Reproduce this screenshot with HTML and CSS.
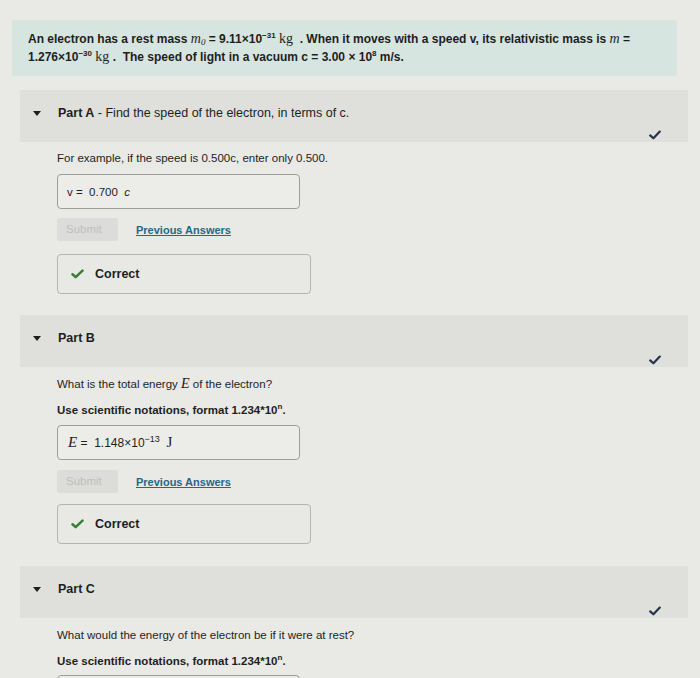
FILE: index.html
```html
<!DOCTYPE html>
<html>
<head>
<meta charset="utf-8">
<link rel="stylesheet" href="styles.css">
</head>
<body>
<div class="page">
  <div class="intro">
    <div class="line">An electron has a rest mass <span class="mi">m</span><sub class="msub">0</sub> = 9.11×10<sup>−31</sup> <span class="mr">kg</span> &nbsp;. When it moves with a speed v, its relativistic mass is <span class="mi">m</span> =</div>
    <div class="line">1.276×10<sup>−30</sup> <span class="mr">kg</span> .&nbsp; The speed of light in a vacuum c = 3.00 × 10<sup>8</sup> m/s.</div>
  </div>

  <section class="part">
    <div class="band">
      <div class="band-title"><span class="tri"></span><span><b>Part A</b> - Find the speed of the electron, in terms of c.</span></div>
      <svg class="status" viewBox="0 0 12 10" width="12" height="10"><path d="M1.2 5.4 L4.4 8.3 L10.8 1.6" fill="none" stroke="#26344a" stroke-width="2.2" stroke-linecap="round" stroke-linejoin="round"/></svg>
    </div>
    <div class="body a">
      <p class="q">For example, if the speed is 0.500c, enter only 0.500.</p>
      <div class="answer"><span>v = &nbsp;0.700 &nbsp;<span class="ic">c</span></span></div>
      <div class="actions"><span class="submit">Submit</span><a class="prev">Previous Answers</a></div>
      <div class="correct"><svg viewBox="0 0 14 11" width="13" height="10"><path d="M1.5 5.8 L5 9 L12.5 1.8" fill="none" stroke="#3a7f36" stroke-width="2.8" stroke-linecap="round" stroke-linejoin="round"/></svg><span>Correct</span></div>
    </div>
  </section>

  <section class="part">
    <div class="band">
      <div class="band-title"><span class="tri"></span><b>Part B</b></div>
      <svg class="status" viewBox="0 0 12 10" width="12" height="10"><path d="M1.2 5.4 L4.4 8.3 L10.8 1.6" fill="none" stroke="#26344a" stroke-width="2.2" stroke-linecap="round" stroke-linejoin="round"/></svg>
    </div>
    <div class="body b">
      <p class="q">What is the total energy <span class="mi">E</span> of the electron?</p>
      <p class="q bold">Use scientific notations, format 1.234*10<sup>n</sup>.</p>
      <div class="answer e"><span><span class="mi big">E</span> = &nbsp;1.148×10<sup>−13</sup> &nbsp;<span class="mr big">J</span></span></div>
      <div class="actions"><span class="submit">Submit</span><a class="prev">Previous Answers</a></div>
      <div class="correct"><svg viewBox="0 0 14 11" width="13" height="10"><path d="M1.5 5.8 L5 9 L12.5 1.8" fill="none" stroke="#3a7f36" stroke-width="2.8" stroke-linecap="round" stroke-linejoin="round"/></svg><span>Correct</span></div>
    </div>
  </section>

  <section class="part">
    <div class="band">
      <div class="band-title"><span class="tri"></span><b>Part C</b></div>
      <svg class="status" viewBox="0 0 12 10" width="12" height="10"><path d="M1.2 5.4 L4.4 8.3 L10.8 1.6" fill="none" stroke="#26344a" stroke-width="2.2" stroke-linecap="round" stroke-linejoin="round"/></svg>
    </div>
    <div class="body c">
      <p class="q">What would the energy of the electron be if it were at rest?</p>
      <p class="q bold">Use scientific notations, format 1.234*10<sup>n</sup>.</p>
      <div class="answer"></div>
    </div>
  </section>
</div>
</body>
</html>
```

FILE: styles.css
```css
html, body {
  margin: 0;
  padding: 0;
  background: #e9e9e6;
}
body {
  font-family: "Liberation Sans", Arial, sans-serif;
  color: #1e1e1e;
  width: 700px;
  height: 678px;
  overflow: hidden;
}
.page {
  padding: 20px 0 0 0;
}
.intro {
  margin: 0 23px 0 12px;
  background: #d6e5e0;
  padding: 10px 0 10px 16px;
  height: 36px;
  font-size: 12px;
  font-weight: bold;
  line-height: 18px;
}
.intro .line {
  white-space: nowrap;
}
sup {
  font-size: 8px;
  vertical-align: 5px;
  line-height: 0;
}
.msub {
  font-size: 9px;
  vertical-align: -2px;
  line-height: 0;
  font-family: "Liberation Serif", serif;
  font-weight: normal;
  font-style: italic;
}
.mi {
  font-family: "Liberation Serif", serif;
  font-style: italic;
  font-weight: normal;
  font-size: 14px;
}
.mr {
  font-family: "Liberation Serif", serif;
  font-weight: normal;
  font-size: 14px;
}
.band {
  margin: 14px 12px 0 20px;
  height: 52px;
  background: #dfdfdc;
  position: relative;
}
.band-title {
  display: flex;
  align-items: center;
  padding-top: 15px;
  font-size: 12.5px;
  line-height: 16px;
}
.tri {
  display: inline-block;
  width: 0;
  height: 0;
  border-left: 4px solid transparent;
  border-right: 4px solid transparent;
  border-top: 5px solid #1e1e1e;
  margin: 0 17px 0 13px;
}
.status {
  position: absolute;
  right: 27px;
  bottom: 2px;
}
.body {
  padding-left: 57px;
}
.q {
  margin: 7px 0 0 0;
  font-size: 11.5px;
  line-height: 18px;
}
.q + .q {
  margin-top: 8px;
}
.q.bold {
  font-weight: bold;
}
.answer {
  margin-top: 7px;
  width: 243px;
  height: 35px;
  box-sizing: border-box;
  border: 1px solid #9d9d9b;
  border-radius: 4px;
  background: #ecece9;
  display: flex;
  align-items: center;
  padding-left: 9px;
  font-size: 11.5px;
}
.answer.e {
  font-size: 12px;
  padding-left: 10px;
}
.answer .ic {
  font-style: italic;
}
.answer .big {
  font-size: 15px;
}
.answer sup {
  font-size: 9px;
}
.actions {
  margin-top: 9px;
  display: flex;
  align-items: center;
  height: 23px;
}
.submit {
  width: 61px;
  height: 23px;
  background: #dcdcda;
  color: #bfbfbd;
  font-size: 11.5px;
  line-height: 23px;
  padding-left: 9px;
  box-sizing: border-box;
  border-radius: 2px;
}
.prev {
  margin-left: 18px;
  font-size: 11px;
  font-weight: bold;
  color: #246886;
  text-decoration: underline;
}
.correct {
  margin-top: 13px;
  width: 254px;
  height: 40px;
  box-sizing: border-box;
  border: 1px solid #b3b3b0;
  border-radius: 4px;
  background: #e8e8e5;
  display: flex;
  align-items: center;
  padding-left: 13px;
  gap: 11px;
  font-size: 12.5px;
  font-weight: bold;
}
.body.a .correct { margin-bottom: 21px; }
.body.b .correct { margin-bottom: 22px; }
.part + .part .band { margin-top: 0; }
.body.b .q:first-child, .body.c .q:first-child { margin-top: 8px; }
.body.b .answer { margin-top: 6px; }
.body.b .actions { margin-top: 10px; }
.body.b .correct { margin-top: 11px; }
.body.c .answer { margin-top: 5px; }
```
